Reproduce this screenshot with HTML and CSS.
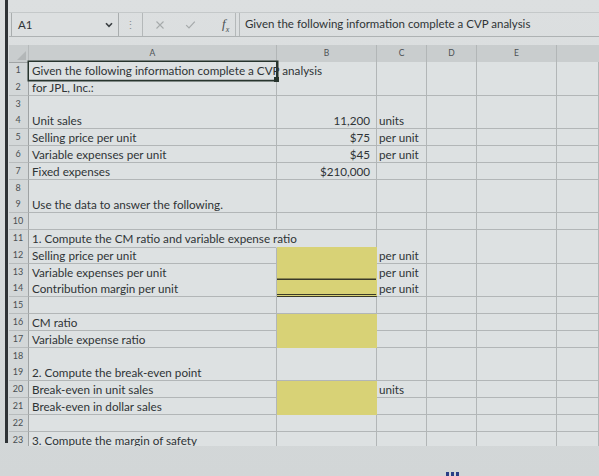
FILE: index.html
```html
<!DOCTYPE html>
<html>
<head>
<meta charset="utf-8">
<link rel="stylesheet" href="styles.css">
</head>
<body>
<div class="screen">
  <div class="bezel"></div>
  <div class="app">
    <div class="fbar">
      <div class="namebox"><span class="ref">A1</span>
        <svg class="chev" width="8" height="6" viewBox="0 0 8 6"><path d="M1 1.2 L4 4.4 L7 1.2" fill="none" stroke="#3a3f42" stroke-width="1.6"/></svg>
      </div>
      <div class="dots">⋮</div>
      <div class="fbtns">
        <svg class="ico" width="10" height="10" viewBox="0 0 10 10"><path d="M1.5 1.5 L8.5 8.5 M8.5 1.5 L1.5 8.5" stroke="#a6aaab" stroke-width="1.1" fill="none"/></svg>
        <svg class="ico" width="11" height="10" viewBox="0 0 11 10"><path d="M1.2 5.2 L4 8 L9.8 1.6" stroke="#a6aaab" stroke-width="1.2" fill="none"/></svg>
        <span class="fx">f<sub>x</sub></span>
      </div>
      <div class="formula">Given the following information complete a CVP analysis</div>
    </div>
    <div class="sheet">
      <div class="row head">
        <div class="corner"><span class="tri"></span></div>
        <div class="ch">A</div><div class="ch">B</div><div class="ch">C</div><div class="ch">D</div><div class="ch">E</div><div class="ch last"></div>
      </div>
      <div class="row"><div class="rh">1</div><div class="c a sel ov">Given the following information complete a CVP analysis<span class="handle"></span></div><div class="c"></div><div class="c"></div><div class="c"></div><div class="c"></div><div class="c"></div></div>
      <div class="row"><div class="rh">2</div><div class="c a">for JPL, Inc.:</div><div class="c"></div><div class="c"></div><div class="c"></div><div class="c"></div><div class="c"></div></div>
      <div class="row"><div class="rh">3</div><div class="c a"></div><div class="c"></div><div class="c"></div><div class="c"></div><div class="c"></div><div class="c"></div></div>
      <div class="row"><div class="rh">4</div><div class="c a">Unit sales</div><div class="c num">11,200</div><div class="c t">units</div><div class="c"></div><div class="c"></div><div class="c"></div></div>
      <div class="row"><div class="rh">5</div><div class="c a">Selling price per unit</div><div class="c num">$75</div><div class="c t">per unit</div><div class="c"></div><div class="c"></div><div class="c"></div></div>
      <div class="row"><div class="rh">6</div><div class="c a">Variable expenses per unit</div><div class="c num">$45</div><div class="c t">per unit</div><div class="c"></div><div class="c"></div><div class="c"></div></div>
      <div class="row"><div class="rh">7</div><div class="c a">Fixed expenses</div><div class="c num">$210,000</div><div class="c"></div><div class="c"></div><div class="c"></div><div class="c"></div></div>
      <div class="row"><div class="rh">8</div><div class="c a"></div><div class="c"></div><div class="c"></div><div class="c"></div><div class="c"></div><div class="c"></div></div>
      <div class="row"><div class="rh">9</div><div class="c a">Use the data to answer the following.</div><div class="c"></div><div class="c"></div><div class="c"></div><div class="c"></div><div class="c"></div></div>
      <div class="row"><div class="rh">10</div><div class="c a"></div><div class="c"></div><div class="c"></div><div class="c"></div><div class="c"></div><div class="c"></div></div>
      <div class="row"><div class="rh">11</div><div class="c a ov">1. Compute the CM ratio and variable expense ratio</div><div class="c"></div><div class="c"></div><div class="c"></div><div class="c"></div><div class="c"></div></div>
      <div class="row"><div class="rh">12</div><div class="c a">Selling price per unit</div><div class="c y"></div><div class="c t">per unit</div><div class="c"></div><div class="c"></div><div class="c"></div></div>
      <div class="row"><div class="rh">13</div><div class="c a">Variable expenses per unit</div><div class="c y u1"></div><div class="c t">per unit</div><div class="c"></div><div class="c"></div><div class="c"></div></div>
      <div class="row"><div class="rh">14</div><div class="c a">Contribution margin per unit</div><div class="c y u2"></div><div class="c t">per unit</div><div class="c"></div><div class="c"></div><div class="c"></div></div>
      <div class="row"><div class="rh">15</div><div class="c a"></div><div class="c"></div><div class="c"></div><div class="c"></div><div class="c"></div><div class="c"></div></div>
      <div class="row"><div class="rh">16</div><div class="c a">CM ratio</div><div class="c y"></div><div class="c"></div><div class="c"></div><div class="c"></div><div class="c"></div></div>
      <div class="row"><div class="rh">17</div><div class="c a">Variable expense ratio</div><div class="c y"></div><div class="c"></div><div class="c"></div><div class="c"></div><div class="c"></div></div>
      <div class="row"><div class="rh">18</div><div class="c a"></div><div class="c"></div><div class="c"></div><div class="c"></div><div class="c"></div><div class="c"></div></div>
      <div class="row"><div class="rh">19</div><div class="c a">2. Compute the break-even point</div><div class="c"></div><div class="c"></div><div class="c"></div><div class="c"></div><div class="c"></div></div>
      <div class="row"><div class="rh">20</div><div class="c a">Break-even in unit sales</div><div class="c y"></div><div class="c t">units</div><div class="c"></div><div class="c"></div><div class="c"></div></div>
      <div class="row"><div class="rh">21</div><div class="c a">Break-even in dollar sales</div><div class="c y"></div><div class="c"></div><div class="c"></div><div class="c"></div><div class="c"></div></div>
      <div class="row"><div class="rh">22</div><div class="c a"></div><div class="c"></div><div class="c"></div><div class="c"></div><div class="c"></div><div class="c"></div></div>
      <div class="row"><div class="rh">23</div><div class="c a">3. Compute the margin of safety</div><div class="c"></div><div class="c"></div><div class="c"></div><div class="c"></div><div class="c"></div></div>
    </div>
    <div class="taskbar"><span class="tb-icon"></span></div>
  </div>
</div>
</body>
</html>
```
FILE: styles.css
```css
html, body {
  margin: 0;
  padding: 0;
}
body {
  width: 599px;
  height: 476px;
  overflow: hidden;
  background: linear-gradient(180deg, #dcdfe0 0%, #d6dadb 60%, #d2d6d7 100%);
  font-family: Lato, "Open Sans", sans-serif;
  color: #2f3436;
}
.screen {
  display: flex;
  height: 476px;
}
.bezel {
  margin-left: 5px;
  width: 3px;
  height: 443px;
  background: #2f3336;
  flex: none;
}
.app {
  flex: 1;
  padding-left: 1px;
  display: flex;
  flex-direction: column;
  min-width: 0;
}
.fbar {
  margin-top: 12px;
  height: 23px;
  display: flex;
  align-items: stretch;
  border-top: 1px solid #c4c8c9;
  border-bottom: 1px solid #aeb2b3;
}
.namebox {
  margin-left: 2px;
  width: 108px;
  border: 1px solid #a9adae;
  border-top: none;
  border-bottom: none;
  background: #dcdfe0;
  display: flex;
  align-items: center;
  justify-content: space-between;
  padding: 0 5px 0 6px;
  box-sizing: border-box;
  font-size: 11.5px;
}
.dots {
  width: 23px;
  text-align: center;
  font-size: 11px;
  line-height: 23px;
  color: #8a8e90;
}
.fbtns {
  width: 94px;
  flex: none;
  border-left: 1px solid #b4b8b9;
  border-right: 1px solid #b4b8b9;
  box-sizing: border-box;
  display: flex;
  align-items: center;
  padding-left: 12px;
  gap: 20px;
}
.fx {
  font-family: "Liberation Serif", serif;
  font-style: italic;
  font-size: 13px;
  color: #4a4f52;
  margin-left: 6px;
}
.fx sub {
  font-size: 8px;
}
.formula {
  flex: 1;
  margin-left: 3px;
  border-left: 1px solid #b4b8b9;
  padding-left: 5px;
  font-size: 11.5px;
  line-height: 22px;
  white-space: nowrap;
  overflow: hidden;
}
.sheet {
  margin-top: 8px;
  height: 401px;
  overflow: hidden;
  flex: none;
}
.row {
  display: grid;
  grid-template-columns: 20px 248px 100px 50px 50px 80px 1fr;
  height: 16.8px;
}
.row.head {
  height: 17px;
  background: #c9cdce;
}
.corner {
  position: relative;
  border-right: 1px solid #b6babb;
  border-bottom: 1px solid #9fa3a4;
}
.tri {
  position: absolute;
  right: 2px;
  bottom: 2px;
  width: 0;
  height: 0;
  border-left: 9px solid transparent;
  border-bottom: 9px solid #b3b7b8;
}
.ch {
  border-right: 1px solid #b2b6b7;
  border-bottom: 1px solid #9fa3a4;
  text-align: center;
  font-size: 8.5px;
  line-height: 17px;
  color: #4c5154;
}
.ch.last {
  border-right: none;
}
.rh {
  background: #d3d7d8;
  border-right: 1px solid #9ea2a3;
  border-bottom: 1px solid #b8bcbd;
  font-size: 9px;
  line-height: 16px;
  text-align: center;
  color: #4a4f52;
  padding-right: 1px;
}
.c {
  background: #dde1e2;
  border-right: 1px solid #b2b6b7;
  border-bottom: 1px solid #b2b6b7;
  font-size: 11.7px;
  line-height: 17px;
  white-space: nowrap;
  overflow: hidden;
  min-width: 0;
}
.a {
  padding-left: 3px;
}
.ov {
  overflow: visible;
  position: relative;
  z-index: 1;
  border-right-color: transparent;
}
.num {
  text-align: right;
  padding-right: 6px;
}
.t {
  padding-left: 2px;
}
.sel {
  box-shadow: 0 0 0 1.5px #27342d;
  border-right-color: #27342d;
  z-index: 2;
}
.handle {
  position: absolute;
  right: -3px;
  bottom: -3px;
  width: 5px;
  height: 5px;
  background: #27342d;
}
.y {
  background: #d8d276;
  border-right-color: #d8d276;
  border-bottom-color: #d8d276;
}
.y.u1 {
  border-bottom-color: #d8d276;
  box-shadow: inset 0 -1.5px 0 #3a3a28;
}
.y.u2 {
  border-bottom: 3px double #3a3a28;
}
.taskbar {
  flex: 1;
  display: flex;
  align-items: flex-end;
  padding-left: 437px;
}
.tb-icon {
  width: 14px;
  height: 4px;
  background: repeating-linear-gradient(90deg, #2b3f86 0 3px, transparent 3px 5px);
}
```
